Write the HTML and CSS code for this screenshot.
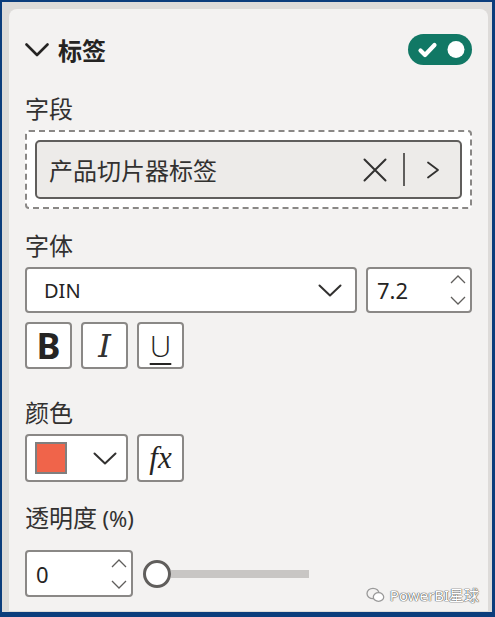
FILE: index.html
```html
<!DOCTYPE html>
<html lang="zh">
<head>
<meta charset="utf-8">
<link rel="stylesheet" href="styles.css">
</head>
<body>
<div class="frame">
  <div class="card">
    <div class="header">
      <div class="title">
        <svg class="chev-down" width="24" height="14" viewBox="0 0 24 14"><path d="M1.5 1.5 L12 12 L22.5 1.5" fill="none" stroke="#252423" stroke-width="2.6" stroke-linecap="round" stroke-linejoin="round"/></svg>
        <span>标签</span>
      </div>
      <div class="toggle">
        <svg width="64" height="31" viewBox="0 0 64 31"><path d="M12.5 16.5 L17 21 L26.5 11" fill="none" stroke="#fff" stroke-width="4.2" stroke-linecap="round" stroke-linejoin="round"/><circle cx="48" cy="15.5" r="8.5" fill="#fff"/></svg>
      </div>
    </div>

    <div class="label l-field">字段</div>
    <div class="dropzone">
      <div class="well">
        <span class="well-text">产品切片器标签</span>
        <div class="well-icons">
          <svg width="24" height="24" viewBox="0 0 24 24"><path d="M1.5 1.5 L22.5 22.5 M22.5 1.5 L1.5 22.5" stroke="#323130" stroke-width="2" stroke-linecap="round"/></svg>
          <span class="sep"></span>
          <svg width="14" height="18" viewBox="0 0 14 18"><path d="M2 1.5 L12 9 L2 16.5" fill="none" stroke="#323130" stroke-width="1.8" stroke-linecap="round" stroke-linejoin="round"/></svg>
        </div>
      </div>
    </div>

    <div class="label l-font">字体</div>
    <div class="row font-row">
      <div class="select">
        <span class="select-text">DIN</span>
        <svg width="24" height="13" viewBox="0 0 24 13"><path d="M1.5 1.5 L12 11.5 L22.5 1.5" fill="none" stroke="#323130" stroke-width="2" stroke-linecap="round" stroke-linejoin="round"/></svg>
      </div>
      <div class="spin size-spin">
        <span class="spin-text">7.2</span>
        <div class="spin-arrows">
          <svg width="16" height="9" viewBox="0 0 16 9"><path d="M1 8 L8 1 L15 8" fill="none" stroke="#605e5c" stroke-width="1.3"/></svg>
          <svg width="16" height="9" viewBox="0 0 16 9"><path d="M1 1 L8 8 L15 1" fill="none" stroke="#605e5c" stroke-width="1.3"/></svg>
        </div>
      </div>
    </div>
    <div class="row fmt-row">
      <div class="btn b">B</div>
      <div class="btn i">I</div>
      <div class="btn u">U</div>
    </div>

    <div class="label l-color">颜色</div>
    <div class="row color-row">
      <div class="color-select">
        <span class="swatch"></span>
        <svg width="24" height="13" viewBox="0 0 24 13"><path d="M1.5 1.5 L12 11.5 L22.5 1.5" fill="none" stroke="#323130" stroke-width="2" stroke-linecap="round" stroke-linejoin="round"/></svg>
      </div>
      <div class="btn fx">fx</div>
    </div>

    <div class="label l-trans">透明度 <span class="latin">(%)</span></div>
    <div class="row trans-row">
      <div class="spin trans-spin">
        <span class="spin-text">0</span>
        <div class="spin-arrows">
          <svg width="16" height="9" viewBox="0 0 16 9"><path d="M1 8 L8 1 L15 8" fill="none" stroke="#605e5c" stroke-width="1.3"/></svg>
          <svg width="16" height="9" viewBox="0 0 16 9"><path d="M1 1 L8 8 L15 1" fill="none" stroke="#605e5c" stroke-width="1.3"/></svg>
        </div>
      </div>
      <div class="slider">
        <span class="thumb"></span>
        <span class="track"></span>
      </div>
    </div>

    <div class="watermark">
      <svg width="19" height="16" viewBox="0 0 19 16"><ellipse cx="7" cy="6.5" rx="6" ry="5.2" fill="none" stroke="#9a9a9a" stroke-width="1.3"/><ellipse cx="12.5" cy="10" rx="5.2" ry="4.4" fill="#fff" stroke="#9a9a9a" stroke-width="1.3"/></svg>
      <span>PowerBI星球</span>
    </div>
  </div>
</div>
</body>
</html>
```

FILE: styles.css
```css
* { box-sizing: border-box; }
html, body { margin: 0; padding: 0; }
body {
  width: 495px;
  height: 617px;
  font-family: "Noto Sans", "Noto Sans CJK SC", sans-serif;
  color: #252423;
  overflow: hidden;
}
.frame {
  width: 495px;
  height: 617px;
  border-style: solid;
  border-color: #0b3d7c;
  border-width: 2px 3px 5px 2px;
  background: #dddbd9;
  padding: 7px 4px 1px 7px;
  display: flex;
}
.card {
  flex: 1;
  position: relative;
  background: #f3f2f1;
  border-radius: 8px 8px 0 0;
  padding: 24px 16px 0 16px;
  display: flex;
  flex-direction: column;
}
.header {
  height: 32px;
  display: flex;
  align-items: center;
  justify-content: space-between;
}
.title {
  display: flex;
  align-items: center;
  gap: 9px;
  font-family: "Noto Sans CJK SC", sans-serif;
  font-weight: 700;
  font-size: 24px;
  color: #252423;
}
.chev-down { margin-top: 2px; }
.toggle {
  width: 64px;
  height: 31px;
  border-radius: 16px;
  background: #117865;
  display: flex;
}
.label {
  font-family: "Noto Sans CJK SC", sans-serif;
  font-size: 24px;
  line-height: 32px;
  height: 32px;
  color: #323130;
}
.label .latin { font-family: "Noto Sans", sans-serif; font-size: 22px; }
.l-field { margin-top: 27px; }
.dropzone {
  margin-top: 6px;
  height: 79px;
  border: 2px dashed #8a8886;
  border-radius: 4px;
  background: #fff;
  padding: 8px 8px;
}
.well {
  height: 100%;
  border: 2px solid #605e5c;
  border-radius: 5px;
  background: #edebe9;
  display: flex;
  align-items: center;
  justify-content: space-between;
  padding: 0 20px 0 12px;
}
.well-text {
  font-family: "Noto Sans CJK SC", sans-serif;
  font-size: 24px;
  color: #323130;
}
.well-icons {
  display: flex;
  align-items: center;
}
.sep {
  display: block;
  width: 2px;
  height: 33px;
  background: #605e5c;
  margin: 0 21px 0 16px;
}
.l-font { margin-top: 20px; }
.row { display: flex; }
.font-row { margin-top: 6px; gap: 9px; height: 46px; }
.select {
  width: 332px;
  border: 2px solid #8a8886;
  border-radius: 4px;
  background: #fff;
  display: flex;
  align-items: center;
  justify-content: space-between;
  padding: 0 13px 0 17px;
}
.select-text { font-size: 20px; color: #252423; }
.spin {
  border: 2px solid #8a8886;
  border-radius: 4px;
  background: #fff;
  display: flex;
  align-items: center;
  justify-content: space-between;
}
.size-spin { flex: 1; padding: 0 4px 0 9px; }
.spin-text { font-size: 22px; color: #252423; }
.spin-arrows {
  display: flex;
  flex-direction: column;
  gap: 12px;
}
.fmt-row { margin-top: 9px; gap: 9px; height: 47px; }
.btn {
  width: 47px;
  height: 47px;
  border: 2px solid #8a8886;
  border-radius: 4px;
  background: #fff;
  display: flex;
  align-items: center;
  justify-content: center;
  color: #252423;
}
.btn.b { font-family: "Noto Sans", sans-serif; font-weight: 700; font-size: 36px; }
.btn.i { font-family: "DejaVu Serif", serif; font-style: italic; font-weight: 300; font-size: 32px; -webkit-text-stroke: 0; color: #323130; }
.btn.u { font-family: "Open Sans", "Noto Sans", sans-serif; font-weight: 300; font-size: 30px; text-decoration: underline; text-decoration-thickness: 2px; text-underline-offset: 6px; }
.btn.fx { font-family: "Liberation Serif", serif; font-style: italic; font-size: 31px; }
.l-color { margin-top: 27px; }
.color-row { margin-top: 6px; gap: 9px; height: 48px; }
.color-select {
  width: 103px;
  border: 2px solid #8a8886;
  border-radius: 4px;
  background: #fff;
  display: flex;
  align-items: center;
  justify-content: space-between;
  padding: 0 9px 0 8px;
}
.swatch {
  width: 32px;
  height: 32px;
  border: 2px solid #7f7f7f;
  background: #f0644a;
}
.color-row .btn { height: 48px; }
.l-trans { margin-top: 19px; }
.trans-row { margin-top: 17px; height: 47px; align-items: center; }
.trans-spin { width: 108px; height: 47px; padding: 0 4px 0 9px; }
.slider {
  display: flex;
  align-items: center;
  margin-left: 10px;
}
.thumb {
  width: 28px;
  height: 28px;
  border-radius: 50%;
  border: 3px solid #605e5c;
  background: #fff;
}
.track {
  width: 138px;
  height: 8px;
  background: #c8c6c4;
}
.watermark {
  position: absolute;
  right: 9px;
  bottom: 6px;
  display: flex;
  align-items: center;
  gap: 5px;
  font-family: "Noto Sans", "Noto Sans CJK SC", sans-serif;
  font-size: 15px;
  color: #fff;
  text-shadow: 0 0 1px #555, 0 0 1px #555, 0 0 1px #555;
}
```
